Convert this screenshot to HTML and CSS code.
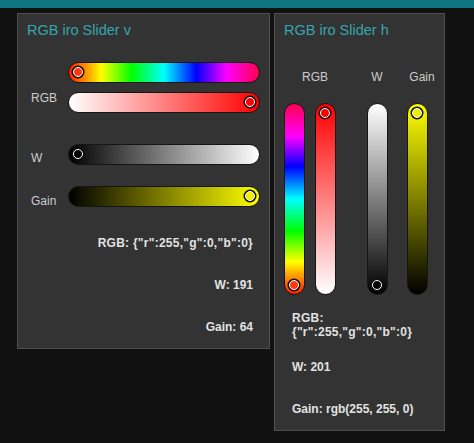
FILE: index.html
```html
<!DOCTYPE html>
<html>
<head>
<meta charset="utf-8">
<link rel="stylesheet" href="styles.css">
</head>
<body>
<div class="topbar"></div>
<div class="main">
  <section class="panel panel-v">
    <h2 class="title">RGB iro Slider v</h2>
    <div class="rows">
      <div class="row row-rgb">
        <span class="lbl">RGB</span>
        <div class="stack">
          <div class="hs hue-h"><span class="thumb t-hue at-left"></span></div>
          <div class="hs red-h"><span class="thumb t-red at-right"></span></div>
        </div>
      </div>
      <div class="row row-w">
        <span class="lbl">W</span>
        <div class="hs white-h"><span class="thumb t-black at-left"></span></div>
      </div>
      <div class="row row-gain">
        <span class="lbl">Gain</span>
        <div class="hs gain-h"><span class="thumb t-yellow at-right"></span></div>
      </div>
    </div>
    <div class="values values-v">
      <div class="val"><span class="json">RGB: {"r":255,"g":0,"b":0}</span></div>
      <div class="val">W: 191</div>
      <div class="val">Gain: 64</div>
    </div>
  </section>
  <section class="panel panel-h">
    <h2 class="title">RGB iro Slider h</h2>
    <div class="hlabels">
      <span class="hl hl-rgb">RGB</span>
      <span class="hl hl-w">W</span>
      <span class="hl hl-gain">Gain</span>
    </div>
    <div class="vsliders">
      <div class="vs hue-v"><span class="thumb t-hue at-bottom"></span></div>
      <div class="vs red-v"><span class="thumb t-red at-top"></span></div>
      <div class="vs white-v"><span class="thumb t-black at-bottom"></span></div>
      <div class="vs gain-v"><span class="thumb t-yellow at-top"></span></div>
    </div>
    <div class="values values-h">
      <div class="val"><span class="json">RGB:<br>{"r":255,"g":0,"b":0}</span></div>
      <div class="val">W: 201</div>
      <div class="val">Gain: rgb(255, 255, 0)</div>
    </div>
  </section>
</div>
</body>
</html>
```

FILE: styles.css
```css
html, body {
  margin: 0;
  padding: 0;
  background: #111111;
  font-family: "Liberation Sans", Arial, sans-serif;
  height: 100%;
}

.topbar {
  height: 8px;
  background: #0e7480;
}

.main {
  display: flex;
  align-items: flex-start;
  gap: 4px;
  padding: 5px 0 0 17px;
}

.panel {
  box-sizing: border-box;
  background: #333333;
  border: 1px solid #4f4f4f;
}

.panel-v { width: 253px; }
.panel-h { width: 171px; }

.title {
  margin: 0;
  padding: 6px 9px 0;
  font-size: 14.5px;
  line-height: 20px;
  font-weight: normal;
  color: #33a6ad;
}

/* left panel: horizontal sliders */
.rows {
  margin-top: 22px;
  padding-left: 13px;
}

.row {
  display: flex;
  align-items: flex-start;
}

.lbl {
  width: 37px;
  font-size: 12px;
  line-height: 14px;
  color: #cccccc;
}

.row-rgb .lbl { margin-top: 29px; }
.row-w { margin-top: 31px; }
.row-w .lbl { margin-top: 7px; }
.row-gain { margin-top: 21px; }
.row-gain .lbl { margin-top: 8px; }

.stack {
  display: flex;
  flex-direction: column;
  gap: 9px;
}

.hs, .vs {
  position: relative;
  box-sizing: border-box;
  border: 1px solid #151515;
}

.hs {
  width: 192px;
  height: 21px;
  border-radius: 11px;
}

.vs {
  width: 21px;
  height: 192px;
  border-radius: 11px;
}

.hue-h {
  background: linear-gradient(to right, #ff1a00, #ffff00 17%, #00ff00 33%, #00ffff 50%, #0000ff 67%, #ff00ff 83%, #ff0050);
}
.red-h { background: linear-gradient(to right, #ffffff, #ff0000); }
.white-h { background: linear-gradient(to right, #000000, #ffffff); }
.gain-h { background: linear-gradient(to right, #000000, #ffff00); }

.hue-v {
  background: linear-gradient(to top, #ff1a00, #ffff00 17%, #00ff00 33%, #00ffff 50%, #0000ff 67%, #ff00ff 83%, #ff0050);
}
.red-v { background: linear-gradient(to top, #ffffff, #ff0000); }
.white-v { background: linear-gradient(to top, #000000, #ffffff); }
.gain-v { background: linear-gradient(to top, #000000, #ffff00); }

.thumb {
  position: absolute;
  width: 8px;
  height: 8px;
  border: 1.5px solid #ffffff;
  border-radius: 50%;
  box-shadow: 0 0 0 1.5px #111111;
}

.at-left { left: 4px; top: 4px; }
.at-right { right: 4px; top: 4px; }
.at-top { top: 4px; left: 4px; }
.at-bottom { bottom: 4px; left: 4px; }

.t-hue { background: #ff3a10; }
.t-red { background: #ff0000; }
.t-black { background: #000000; }
.t-yellow { background: #eeee00; }

/* right panel: vertical sliders */
.hlabels {
  display: flex;
  margin-top: 30px;
  padding-left: 15px;
  font-size: 12px;
  line-height: 14px;
  color: #cccccc;
}

.hl { text-align: center; }
.hl-rgb { width: 50px; }
.hl-w { width: 50px; margin-left: 12px; }
.hl-gain { width: 40px; }

.vsliders {
  display: flex;
  margin-top: 19px;
  padding-left: 9px;
}

.red-v { margin-left: 10px; }
.white-v { margin-left: 31px; }
.gain-v { margin-left: 19px; }

/* values */
.values {
  font-size: 12px;
  line-height: 14px;
  font-weight: bold;
  color: #e2e2e2;
}

.json { letter-spacing: 0.25px; }

.values-v { margin-top: 14px; }
.values-h { margin-top: 9px; }

.val {
  height: 42px;
  display: flex;
  align-items: center;
}

.values-v .val {
  justify-content: flex-end;
  padding-right: 16px;
}

.values-h .val {
  padding-left: 17px;
}
```
